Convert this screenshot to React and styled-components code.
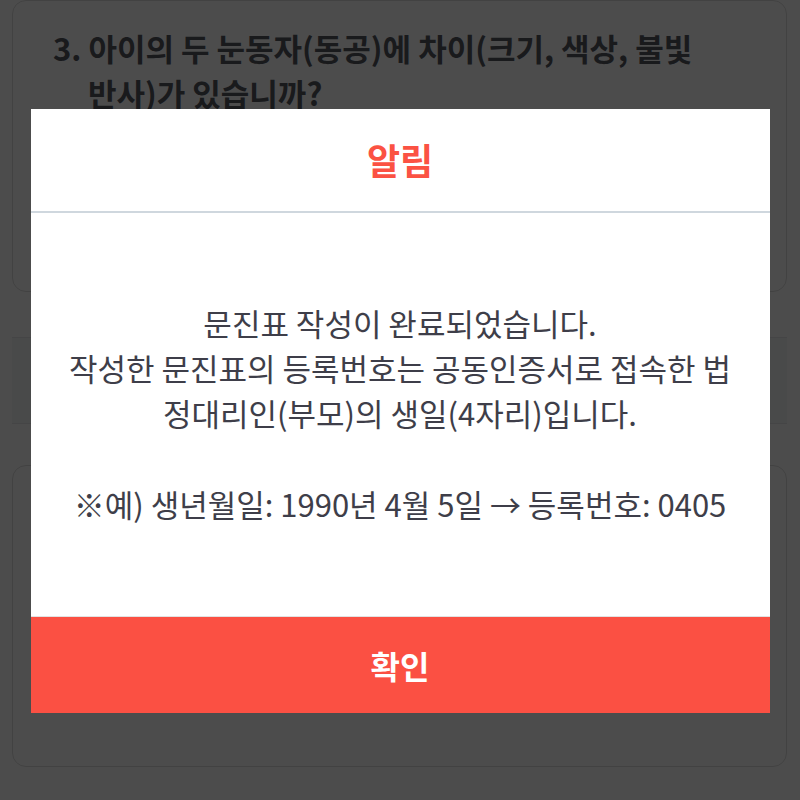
import React from "react";
import styled, { createGlobalStyle } from "styled-components";

const GlobalStyle = createGlobalStyle`
  html, body {
    margin: 0;
    padding: 0;
    background: #ffffff;
    font-family: "Noto Sans CJK KR", "Noto Sans", sans-serif;
  }
`;

const Page = styled.div`
  padding: 0 13px 0 12px;
  display: flex;
  flex-direction: column;
  min-height: 800px;
  box-sizing: border-box;
`;

const Card = styled.div`
  border: 1px solid #dedede;
  border-radius: 14px;
  background: #ffffff;
  height: ${(p) => p.height}px;
  margin-top: ${(p) => p.top || 0}px;
  box-sizing: border-box;
  padding: 24px 60px 0 40px;
`;

const Band = styled.div`
  margin-top: 45px;
  height: 87px;
  background: #f6f7f9;
  border-top: 1px solid #e6e7ea;
  border-bottom: 1px solid #e6e7ea;
  box-sizing: border-box;
`;

const Question = styled.ol`
  margin: 0;
  padding: 0 0 0 35px;
  list-style: none;
  font-size: 31px;
  font-weight: 700;
  line-height: 45px;
  color: #55575f;
`;

const QuestionItem = styled.li`
  text-indent: -35px;
`;

const Overlay = styled.div`
  position: fixed;
  inset: 0;
  background: rgba(0, 0, 0, 0.7);
  display: flex;
  justify-content: center;
  align-items: flex-start;
  padding-top: 109px;
  box-sizing: border-box;
`;

const Modal = styled.div`
  width: 739px;
  height: 604px;
  background: #ffffff;
  display: flex;
  flex-direction: column;
`;

const Header = styled.div`
  height: 100px;
  padding-bottom: 2px;
  display: flex;
  align-items: center;
  justify-content: center;
  border-bottom: 2px solid #cfd7de;
  font-size: 36px;
  font-weight: 700;
  color: #fb5243;
`;

const Body = styled.div`
  flex: 1;
  display: flex;
  flex-direction: column;
  align-items: center;
  justify-content: center;
  padding: 0 35px 4px;
  text-align: center;
  font-size: 31px;
  line-height: 45px;
  color: #3e3e49;
`;

const Line = styled.p`
  margin: 0;
  margin-top: ${(p) => (p.gap ? 46 : 0)}px;
`;

const ConfirmButton = styled.button`
  height: 97px;
  border: none;
  border-top: 1px solid #e2e2e2;
  background: #fb5043;
  color: #ffffff;
  font-family: inherit;
  font-size: 32px;
  font-weight: 700;
  cursor: pointer;
`;

function App() {
  return (
    <>
      <GlobalStyle />
      <Page>
        <Card height={292}>
          <Question>
            <QuestionItem>
              3. 아이의 두 눈동자(동공)에 차이(크기, 색상, 불빛 반사)가
              있습니까?
            </QuestionItem>
          </Question>
        </Card>
        <Band />
        <Card height={302} top={41} />
      </Page>

      <Overlay>
        <Modal>
          <Header>알림</Header>
          <Body>
            <Line>
              문진표 작성이 완료되었습니다.
              <br />
              작성한 문진표의 등록번호는 공동인증서로 접속한 법정대리인(부모)의
              생일(4자리)입니다.
            </Line>
            <Line gap>※예) 생년월일: 1990년 4월 5일 → 등록번호: 0405</Line>
          </Body>
          <ConfirmButton>확인</ConfirmButton>
        </Modal>
      </Overlay>
    </>
  );
}

export default App;
